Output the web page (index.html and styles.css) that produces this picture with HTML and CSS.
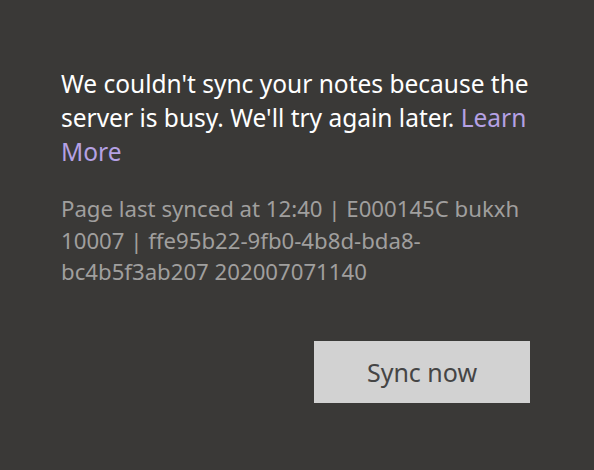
FILE: index.html
```html
<!DOCTYPE html>
<html>
<head>
<meta charset="utf-8">
<link rel="stylesheet" href="styles.css">
</head>
<body>
<div class="panel">
  <p class="message">We couldn't sync your notes because the server is busy. We'll try again later. <a class="link" href="#">Learn More</a></p>
  <p class="details">Page last synced at 12:40 | E000145C bukxh 10007 | ffe95b22-9fb0-4b8d-bda8-bc4b5f3ab207 202007071140</p>
  <div class="actions">
    <button class="sync-btn">Sync now</button>
  </div>
</div>
</body>
</html>
```
FILE: styles.css
```css
html, body {
  margin: 0;
  padding: 0;
  background: #3a3937;
  height: 100%;
}
.panel {
  box-sizing: border-box;
  width: 594px;
  height: 470px;
  padding: 67px 61px 0 61px;
  font-family: "Noto Sans", "Open Sans", sans-serif;
}
.message {
  margin: 0;
  color: #ffffff;
  font-size: 24.5px;
  line-height: 34px;
}
.link {
  color: #b5a1e4;
  text-decoration: none;
}
.details {
  margin: 24px 0 0 0;
  color: #a09f9e;
  font-size: 22.2px;
  line-height: 31.5px;
}
.actions {
  display: flex;
  justify-content: flex-end;
  margin-top: 53px;
  margin-right: 3px;
}
.sync-btn {
  width: 216px;
  height: 62px;
  border: none;
  background: #d2d2d2;
  color: #454545;
  font-family: inherit;
  font-size: 25px;
  padding: 0;
}
```
